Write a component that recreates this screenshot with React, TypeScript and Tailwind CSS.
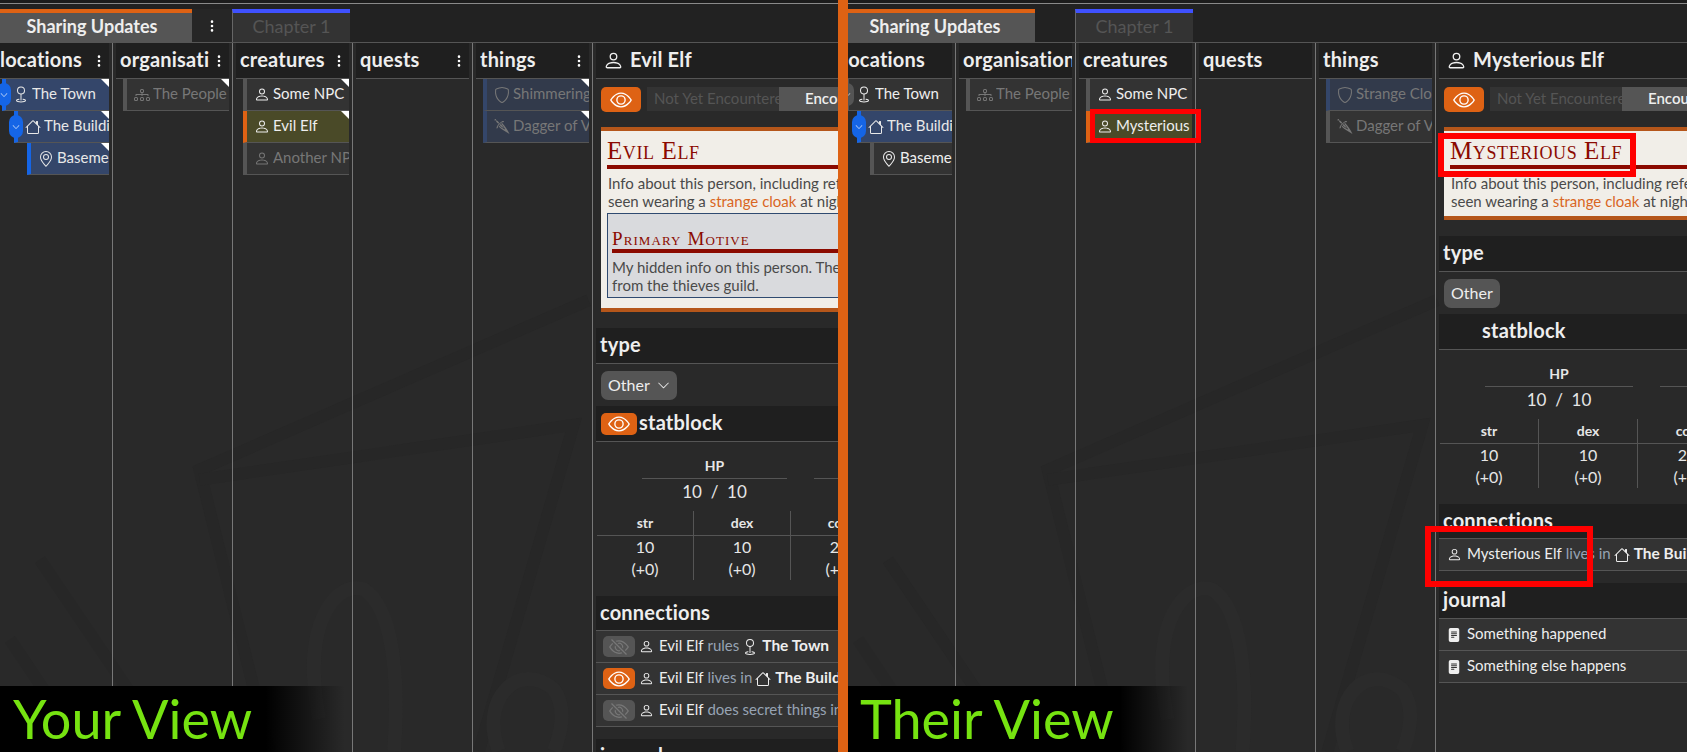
import type { ReactNode } from "react";
import {
  BsChevronDown,
  BsDiagram3,
  BsEye,
  BsEyeSlash,
  BsFileTextFill,
  BsGeo,
  BsGeoAlt,
  BsHouse,
  BsPerson,
  BsShield,
  BsThreeDotsVertical,
} from "react-icons/bs";
import { GiPlainDagger } from "react-icons/gi";

type Tone = "blue" | "plain" | "dim" | "dimBlue" | "selected";

interface Item {
  label: string;
  icon: ReactNode;
  tone: Tone;
  indent?: string;
  toggle?: "blue" | "gray";
  corner?: boolean;
}

interface Column {
  title: string;
  menu?: boolean;
  items: Item[];
}

const toneClass: Record<Tone, string> = {
  blue: "border-[#1565e6] bg-[#34466a] text-[#e8e8e8]",
  plain: "border-[#555555] bg-[#333333] text-[#eeeeee]",
  dim: "border-[#555555] bg-[#333333] text-[#777777]",
  dimBlue: "border-[#34466a] bg-[#323a4b] text-[#777777]",
  selected: "border-[#de6214] bg-[#4a4a28] text-[#eeeeee]",
};

const person = <BsPerson size={17} />;
const dagger = <GiPlainDagger size={17} />;

const yourColumns: Column[] = [
  {
    title: "locations",
    menu: true,
    items: [
      { label: "The Town", icon: <BsGeo size={17} />, tone: "blue", indent: "ml-[6px]", toggle: "blue", corner: true },
      { label: "The Building", icon: <BsHouse size={16} />, tone: "blue", indent: "ml-[18px]", toggle: "blue", corner: true },
      { label: "Basement", icon: <BsGeoAlt size={16} />, tone: "blue", indent: "ml-[31px]", corner: true },
    ],
  },
  {
    title: "organisations",
    menu: true,
    items: [{ label: "The People", icon: <BsDiagram3 size={16} />, tone: "dim", corner: true }],
  },
  {
    title: "creatures",
    menu: true,
    items: [
      { label: "Some NPC", icon: person, tone: "plain", corner: true },
      { label: "Evil Elf", icon: person, tone: "selected", corner: true },
      { label: "Another NPC", icon: person, tone: "dim" },
    ],
  },
  { title: "quests", menu: true, items: [] },
  {
    title: "things",
    menu: true,
    items: [
      { label: "Shimmering Cloak", icon: <BsShield size={16} />, tone: "dimBlue", corner: true },
      { label: "Dagger of Venom", icon: dagger, tone: "dimBlue", corner: true },
    ],
  },
];

const theirColumns: Column[] = [
  {
    title: "locations",
    items: [
      { label: "The Town", icon: <BsGeo size={17} />, tone: "plain", indent: "ml-[6px]", toggle: "gray" },
      { label: "The Building", icon: <BsHouse size={16} />, tone: "blue", indent: "ml-[18px]", toggle: "blue" },
      { label: "Basement", icon: <BsGeoAlt size={16} />, tone: "plain", indent: "ml-[31px]" },
    ],
  },
  { title: "organisations", items: [{ label: "The People", icon: <BsDiagram3 size={16} />, tone: "dim" }] },
  {
    title: "creatures",
    items: [
      { label: "Some NPC", icon: person, tone: "plain" },
      { label: "Mysterious", icon: person, tone: "selected" },
    ],
  },
  { title: "quests", items: [] },
  {
    title: "things",
    items: [
      { label: "Strange Cloak", icon: <BsShield size={16} />, tone: "dimBlue" },
      { label: "Dagger of Venom", icon: dagger, tone: "dim" },
    ],
  },
];

const heading = "pb-[3px] font-['Lato',sans-serif] text-[20px] font-bold leading-none tracking-[0.2px] text-[#eeeeee]";

function Watermark() {
  return (
    <svg className="absolute inset-0 h-full w-full" viewBox="0 0 840 752" fill="none" aria-hidden>
      <g stroke="#272727" strokeWidth="12">
        <path d="M590 300 L200 470 L270 752" />
        <path d="M200 480 L575 425 L480 752" />
        <path d="M10 640 L85 752" />
        <path d="M40 560 L170 752" />
      </g>
      <g stroke="#2b2b2b" strokeWidth="14">
        <path d="M320 720 C300 620 340 580 365 590 C395 610 400 680 395 752" />
        <path d="M500 752 C480 700 520 660 555 690 C570 710 560 740 555 752" />
      </g>
    </svg>
  );
}

function ColumnItem({ item }: { item: Item }) {
  return (
    <div
      className={`relative flex h-[32px] items-center gap-[3px] border-b border-l-4 border-b-[#555555] pl-[7px] ${toneClass[item.tone]} ${
        item.indent ?? "ml-[7px]"
      }`}
    >
      {item.toggle ? (
        <span
          className={`absolute left-[-9px] top-[4px] flex h-[23px] w-[14px] items-center justify-center rounded-full text-white ${
            item.toggle === "blue" ? "bg-[#1565e6]" : "bg-[#555555]"
          }`}
        >
          <BsChevronDown size={8} />
        </span>
      ) : null}
      <span className="flex w-[16px] shrink-0 justify-center">{item.icon}</span>
      <span className="min-w-0 flex-1 overflow-hidden whitespace-nowrap pb-[2px] text-[15px]">{item.label}</span>
      {item.corner ? (
        <span className="absolute right-0 top-0 h-0 w-0 border-l-[8px] border-t-[8px] border-l-transparent border-t-white" />
      ) : null}
    </div>
  );
}

function BoardColumn({ column, first }: { column: Column; first?: boolean }) {
  return (
    <div className={`w-[120px] shrink-0 pl-[3px] pr-[3px] ${first ? "border-l border-transparent" : "border-l border-[#777777]"}`}>
      <div className="flex h-[36px] items-center border-b border-[#555555] bg-[#1f1f1f] pl-[4px]">
        <span className={`${heading} min-w-0 flex-1 overflow-hidden whitespace-nowrap`}>{column.title}</span>
        {column.menu ? (
          <span className="flex w-[20px] shrink-0 justify-center text-white">
            <BsThreeDotsVertical size={14} />
          </span>
        ) : null}
      </div>
      {column.items.map((item) => (
        <ColumnItem key={item.label} item={item} />
      ))}
    </div>
  );
}

function EyeButton({ off, className }: { off?: boolean; className: string }) {
  return (
    <span
      className={`flex shrink-0 items-center justify-center ${className} ${
        off ? "bg-[#555555] text-[#777777]" : "bg-[#de6214] text-white"
      }`}
    >
      {off ? <BsEyeSlash size={20} /> : <BsEye size={22} />}
    </span>
  );
}

function SectionHeader({ children, short }: { children: ReactNode; short?: boolean }) {
  return (
    <div className={`flex items-center border-b border-[#555555] bg-[#1f1f1f] pl-[4px] ${short ? "h-[35px]" : "h-[36px]"}`}>
      {children}
    </div>
  );
}

function ConnectionRow({
  eye,
  name,
  verb,
  icon,
  target,
}: {
  eye?: "on" | "off";
  name: string;
  verb: string;
  icon?: ReactNode;
  target?: string;
}) {
  return (
    <div className={`flex h-[32px] items-center whitespace-nowrap border-b border-[#555555] bg-[#333333] text-[15px] ${eye ? "pl-[7px]" : "pl-[8px]"}`}>
      {eye ? <EyeButton off={eye === "off"} className="mr-[4px] h-[21px] w-[32px] rounded-[5px]" /> : null}
      <span className="mr-[5px] flex text-[#eeeeee]">
        <BsPerson size={15} />
      </span>
      <span className="mr-[4px] pb-[2px] text-[#eeeeee]">{name}</span>
      <span className="mr-[3px] pb-[2px] text-[#97a3b3]">{verb}</span>
      {icon ? <span className="mr-[4px] flex text-[#eeeeee]">{icon}</span> : null}
      {target ? <span className="pb-[2px] text-[15.5px] font-bold text-[#eeeeee]">{target}</span> : null}
    </div>
  );
}

function JournalRow({ label }: { label: string }) {
  return (
    <div className="flex h-[32px] items-center gap-[6px] border-b border-[#555555] bg-[#333333] pl-[8px] text-[15px] text-[#eeeeee]">
      <BsFileTextFill size={14} />
      <span className="pb-[2px]">{label}</span>
    </div>
  );
}

function Statblock({ colWidth, hpWidth }: { colWidth: string; hpWidth: string }) {
  const abilities = [
    { name: "str", value: "10", mod: "(+0)" },
    { name: "dex", value: "10", mod: "(+0)" },
    { name: "con", value: "20", mod: "(+5)" },
  ];
  return (
    <div className="text-center text-[16px] text-[#e6e6e6]">
      <div className="flex gap-[27px] pl-[46px]">
        {["HP", "AC"].map((label, i) => (
          <div key={label} className={hpWidth}>
            <div className="flex h-[37px] items-end justify-center border-b border-[#555555] pb-[5px] font-['Lato',sans-serif] text-[14px] font-bold leading-none">
              {label}
            </div>
            <div className="flex h-[32px] items-center justify-center whitespace-pre pb-[7px] text-[17px]">
              {i === 0 ? "10  /  10" : "12"}
            </div>
          </div>
        ))}
      </div>
      <div className="flex pl-[1px]">
        {abilities.map((a) => (
          <div key={a.name} className={`${colWidth} shrink-0 border-r border-[#555555]`}>
            <div className="flex h-[25px] items-center justify-center border-b border-[#555555] font-['Lato',sans-serif] text-[14px] font-bold leading-none">
              {a.name}
            </div>
            <div className="flex h-[22px] items-center justify-center">{a.value}</div>
            <div className="flex h-[22px] items-center justify-center">{a.mod}</div>
          </div>
        ))}
      </div>
    </div>
  );
}

function Board({ their }: { their?: boolean }) {
  const columns = their ? theirColumns : yourColumns;
  const name = their ? "Mysterious Elf" : "Evil Elf";
  return (
    <div className={`relative z-10 flex w-[1240px] flex-col ${their ? "-ml-[13px]" : "-ml-[8px]"}`}>
      {/* tab strip */}
      <div className="flex h-[34px] border-b border-[#555555] bg-[#222222]">
        <div className="flex w-[200px] items-center justify-center border-t-4 border-[#de6214] bg-[#555555] pb-[2px] font-['Lato',sans-serif] text-[18px] font-bold text-[#eeeeee]">
          Sharing Updates
        </div>
        <div className={`flex w-[40px] items-center justify-center text-white ${their ? "" : "bg-[#262626]"}`}>
          {their ? null : <BsThreeDotsVertical size={14} />}
        </div>
        <div className="flex w-[118px] items-center justify-center border-l border-t-4 border-l-[#666666] border-t-[#3f51ff] bg-[#333333] pb-[2px] font-['Lato',sans-serif] text-[18px] text-[#555555]">
          Chapter 1
        </div>
      </div>

      <div className="flex h-[709px]">
        {columns.map((column, i) => (
          <BoardColumn key={column.title} column={column} first={i === 0} />
        ))}

        {/* detail panel */}
        <div className="w-[640px] shrink-0 border-l border-[#777777] pl-[3px]">
          <div className="flex h-[36px] items-center gap-[6px] border-b border-[#555555] bg-[#1f1f1f] pl-[7px] text-[#eeeeee]">
            <BsPerson size={21} />
            <span className={heading}>{name}</span>
          </div>

          <div className="ml-[5px] mt-[8px] flex gap-[6px]">
            <EyeButton className="h-[25px] w-[40px] rounded-[5px]" />
            <div className="flex h-[24px] text-[15px] leading-[23px]">
              <span className="w-[132px] overflow-hidden whitespace-nowrap bg-[#333333] pl-[7px] text-[#555555]">
                Not Yet Encountered
              </span>
              <span className="w-[132px] bg-[#555555] pl-[26px] font-semibold text-[#eeeeee]">Encountered</span>
            </div>
          </div>

          <div className="ml-[5px] mt-[15px] border-y-4 border-[#b5561a] bg-[#f1eee8] pb-[6px]">
            <h1 className="ml-[6px] flex h-[38px] items-end border-b-4 border-[#8b0a00] pb-[2px] font-['Liberation_Serif',serif] text-[25px] leading-none tracking-[0.6px] text-[#8b0a00] [font-variant:small-caps]">
              {name}
            </h1>
            <div className="ml-[7px] whitespace-nowrap pt-[5px] text-[15px] leading-[18px] text-[#4a4a4a]">
              <div>Info about this person, including references to other things. Has been</div>
              <div>
                seen wearing a <span className="text-[#d9661f]">strange cloak</span> at night in the old town.
              </div>
            </div>
            {their ? null : (
              <div className="mb-[4px] ml-[6px] mt-[3px] h-[85px] whitespace-nowrap border border-[#2f4a70] bg-[#d9dadd] pl-[4px]">
                <h2 className="flex h-[39px] items-end border-b-4 border-[#8b0a00] pb-[1px] font-['Liberation_Serif',serif] text-[19px] leading-none tracking-[1.1px] text-[#8b0a00] [font-variant:small-caps]">
                  Primary Motive
                </h2>
                <div className="pt-[5px] text-[15px] leading-[18px] text-[#4a4a4a]">
                  <div>My hidden info on this person. They are being paid by someone</div>
                  <div>from the thieves guild.</div>
                </div>
              </div>
            )}
          </div>

          <div className="mt-[16px]">
            <SectionHeader>
              <span className={heading}>type</span>
            </SectionHeader>
          </div>
          <div className="ml-[5px] mt-[7px] flex h-[29px] w-fit items-center gap-[7px] rounded-[7px] bg-[#555555] px-[7px] text-[16px] text-[#eeeeee]">
            <span className="pb-[2px]">Other</span>
            {their ? null : <BsChevronDown size={13} />}
          </div>

          <div className="mt-[6px]">
            <SectionHeader>
              {their ? (
                <span className="w-[39px] shrink-0" />
              ) : (
                <EyeButton className="ml-[1px] mr-[2px] h-[22px] w-[36px] rounded-[5px]" />
              )}
              <span className={heading}>statblock</span>
            </SectionHeader>
          </div>

          <Statblock colWidth={their ? "w-[99px]" : "w-[97px]"} hpWidth={their ? "w-[148px]" : "w-[145px]"} />

          <div className="mt-[16px]">
            <SectionHeader short>
              <span className={heading}>connections</span>
            </SectionHeader>
          </div>
          {their ? (
            <ConnectionRow name="Mysterious Elf" verb="lives in" icon={<BsHouse size={16} />} target="The Building" />
          ) : (
            <>
              <ConnectionRow eye="off" name="Evil Elf" verb="rules" icon={<BsGeo size={16} />} target="The Town" />
              <ConnectionRow eye="on" name="Evil Elf" verb="lives in" icon={<BsHouse size={16} />} target="The Building" />
              <ConnectionRow eye="off" name="Evil Elf" verb="does secret things in the basement" />
            </>
          )}

          <div className="mt-[12px]">
            <SectionHeader>
              <span className={heading}>journal</span>
            </SectionHeader>
          </div>
          <JournalRow label="Something happened" />
          <JournalRow label="Something else happens" />
        </div>
      </div>
    </div>
  );
}

function ViewLabel({ text, className }: { text: string; className: string }) {
  return (
    <div
      className={`absolute bottom-0 left-0 z-20 flex h-[66px] items-center font-['Lato',sans-serif] text-[54px] leading-none text-[#76e311] ${className}`}
    >
      {text}
    </div>
  );
}

function Panel({ their }: { their?: boolean }) {
  return (
    <div
      className={`relative h-[752px] overflow-hidden bg-[#292929] font-['Lato',sans-serif] ${their ? "w-[839px]" : "w-[838px]"}`}
    >
      <Watermark />
      <div className="relative z-10 h-[3px] bg-[#1c1c1c]" />
      <div className="relative z-10 h-[1px] bg-[#8a8a8a]" />
      <div className="relative z-10 h-[5px] bg-[#222222]" />
      <Board their={their} />

      {their ? (
        <>
          <span className="absolute left-[242px] top-[109px] z-20 h-[34px] w-[111px] border-[5px] border-[#ff0000]" />
          <span className="absolute left-[590px] top-[133px] z-20 h-[44px] w-[198px] border-[6px] border-[#ff0000]" />
          <span className="absolute left-[577px] top-[526px] z-20 h-[61px] w-[168px] border-[6px] border-[#ff0000]" />
          <ViewLabel
            text="Their View"
            className="w-[340px] bg-[linear-gradient(to_right,#000_80%,transparent)] pl-[12px]"
          />
        </>
      ) : (
        <ViewLabel text="Your View" className="w-[345px] bg-[linear-gradient(to_right,#000_77%,transparent)] pl-[13px]" />
      )}
    </div>
  );
}

export default function App() {
  return (
    <div className="flex h-[752px] w-[1687px] overflow-hidden">
      <Panel />
      <div className="w-[10px] shrink-0 bg-[#de6214]" />
      <Panel their />
    </div>
  );
}
